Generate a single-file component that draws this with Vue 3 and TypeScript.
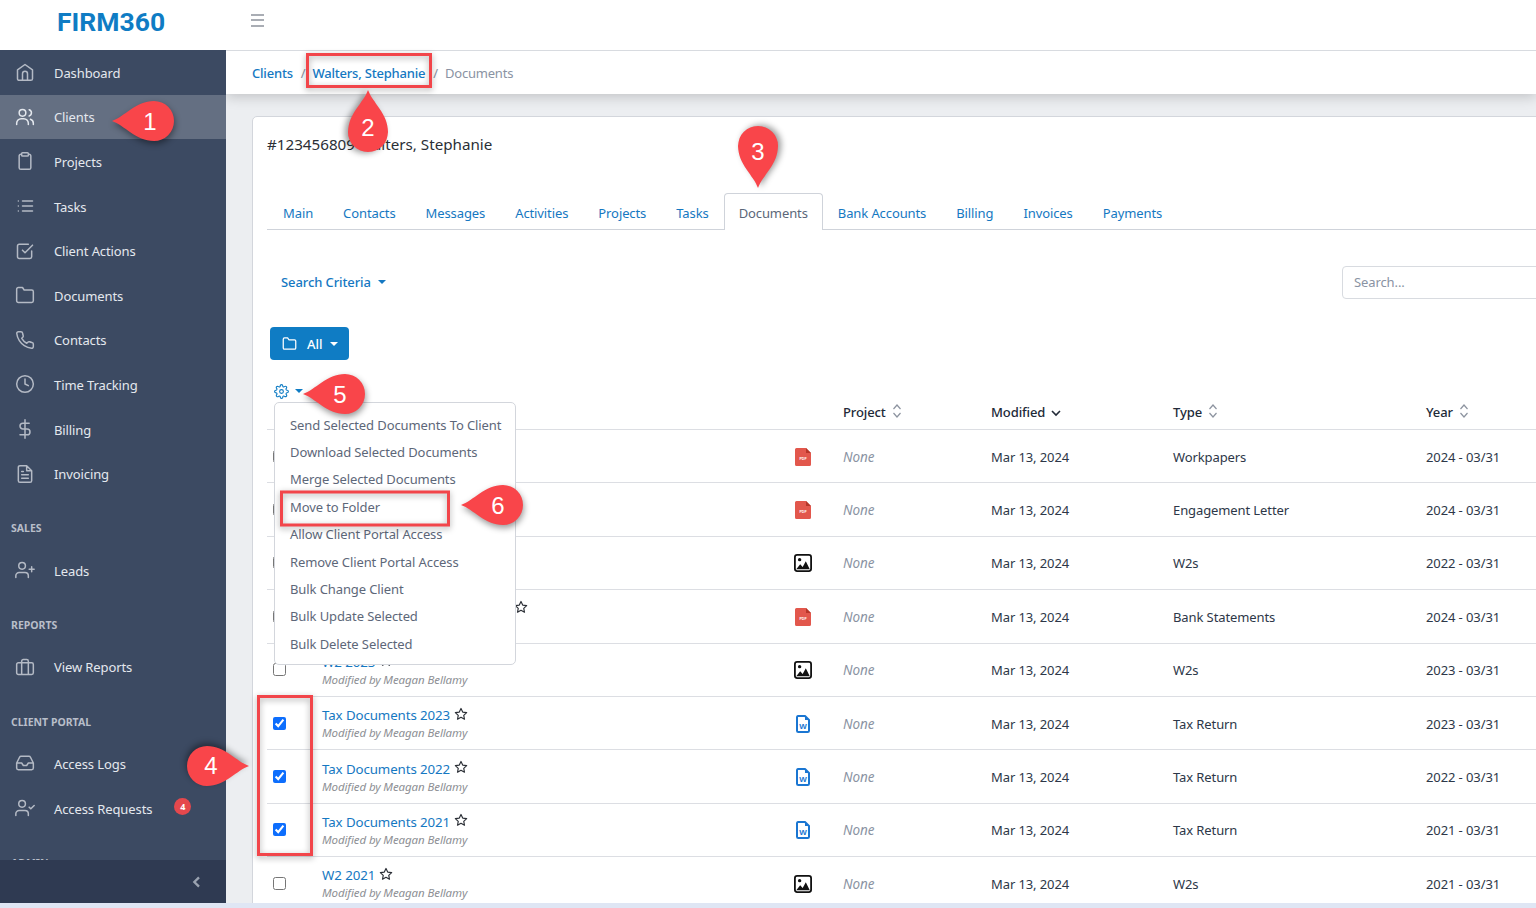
<script setup lang="ts">
const icons: Record<string, string> = {
  home: 'M3 9.5 12 3l9 6.5V20a2 2 0 0 1-2 2H5a2 2 0 0 1-2-2z M9 22v-8a3 3 0 0 1 6 0v8',
  users: 'M2 21v-1.5a5.5 5.5 0 0 1 5.5-5.5h3a5.5 5.5 0 0 1 5.5 5.5V21 M9 11a4 4 0 1 0 0-8 4 4 0 0 0 0 8z M17 3.2a4 4 0 0 1 0 7.6 M22 21v-1.5a5 5 0 0 0-3.5-4.8',
  clipboard: 'M8 4H7a2 2 0 0 0-2 2v14a2 2 0 0 0 2 2h10a2 2 0 0 0 2-2V6a2 2 0 0 0-2-2h-1 M9 2h6a1 1 0 0 1 1 1v2a1 1 0 0 1-1 1H9a1 1 0 0 1-1-1V3a1 1 0 0 1 1-1z',
  list: 'M9 6h12M9 12h12M9 18h12M4 6h.01M4 12h.01M4 18h.01',
  check: 'M9 11l3 3L21 5 M20 12v7a2 2 0 0 1-2 2H5a2 2 0 0 1-2-2V6a2 2 0 0 1 2-2h11',
  folder: 'M22 19a2 2 0 0 1-2 2H4a2 2 0 0 1-2-2V5a2 2 0 0 1 2-2h5l2 3h9a2 2 0 0 1 2 2z',
  phone: 'M22 16.92v3a2 2 0 0 1-2.18 2 19.79 19.79 0 0 1-8.63-3.07 19.5 19.5 0 0 1-6-6 19.79 19.79 0 0 1-3.07-8.67A2 2 0 0 1 4.11 2h3a2 2 0 0 1 2 1.72 12.84 12.84 0 0 0 .7 2.81 2 2 0 0 1-.45 2.11L8.09 9.91a16 16 0 0 0 6 6l1.27-1.27a2 2 0 0 1 2.11-.45 12.84 12.84 0 0 0 2.81.7A2 2 0 0 1 22 16.92z',
  clock: 'M12 2a10 10 0 1 0 0 20 10 10 0 0 0 0-20z M12 6v6l4 2',
  dollar: 'M12 1v22 M17 5H9.5a3.5 3.5 0 0 0 0 7h5a3.5 3.5 0 0 1 0 7H6',
  file: 'M14 2H6a2 2 0 0 0-2 2v16a2 2 0 0 0 2 2h12a2 2 0 0 0 2-2V8z M14 2v6h6 M16 13H8 M16 17H8 M10 9H8',
  userPlus: 'M16 21v-2a4 4 0 0 0-4-4H5a4 4 0 0 0-4 4v2 M8.5 11a4 4 0 1 0 0-8 4 4 0 0 0 0 8z M20 8v6 M23 11h-6',
  briefcase: 'M4 7h16a2 2 0 0 1 2 2v10a2 2 0 0 1-2 2H4a2 2 0 0 1-2-2V9a2 2 0 0 1 2-2z M8 21V5a2 2 0 0 1 2-2h4a2 2 0 0 1 2 2v16',
  inbox: 'M22 12h-6l-2 3h-4l-2-3H2 M5.45 5.11 2 12v6a2 2 0 0 0 2 2h16a2 2 0 0 0 2-2v-6l-3.45-6.89A2 2 0 0 0 16.76 4H7.24a2 2 0 0 0-1.79 1.11z',
  userCheck: 'M16 21v-2a4 4 0 0 0-4-4H5a4 4 0 0 0-4 4v2 M8.5 11a4 4 0 1 0 0-8 4 4 0 0 0 0 8z M17 11l2 2 4-4',
}
const gear = 'M12 15a3 3 0 1 0 0-6 3 3 0 0 0 0 6z M19.4 15a1.65 1.65 0 0 0 .33 1.82l.06.06a2 2 0 0 1 0 2.83 2 2 0 0 1-2.83 0l-.06-.06a1.65 1.65 0 0 0-1.82-.33 1.65 1.65 0 0 0-1 1.51V21a2 2 0 0 1-2 2 2 2 0 0 1-2-2v-.09A1.65 1.65 0 0 0 9 19.4a1.65 1.65 0 0 0-1.82.33l-.06.06a2 2 0 0 1-2.83 0 2 2 0 0 1 0-2.83l.06-.06a1.65 1.65 0 0 0 .33-1.82 1.65 1.65 0 0 0-1.51-1H3a2 2 0 0 1-2-2 2 2 0 0 1 2-2h.09A1.65 1.65 0 0 0 4.6 9a1.65 1.65 0 0 0-.33-1.82l-.06-.06a2 2 0 0 1 0-2.83 2 2 0 0 1 2.83 0l.06.06a1.65 1.65 0 0 0 1.82.33H9a1.65 1.65 0 0 0 1-1.51V3a2 2 0 0 1 2-2 2 2 0 0 1 2 2v.09a1.65 1.65 0 0 0 1 1.51 1.65 1.65 0 0 0 1.82-.33l.06-.06a2 2 0 0 1 2.83 0 2 2 0 0 1 0 2.83l-.06.06a1.65 1.65 0 0 0-.33 1.82V9a1.65 1.65 0 0 0 1.51 1H21a2 2 0 0 1 2 2 2 2 0 0 1-2 2h-.09a1.65 1.65 0 0 0-1.51 1z'

type NavEntry = { label: string; icon?: string; active?: boolean; badge?: string; section?: boolean }
const nav: NavEntry[] = [
  { label: 'Dashboard', icon: 'home' },
  { label: 'Clients', icon: 'users', active: true },
  { label: 'Projects', icon: 'clipboard' },
  { label: 'Tasks', icon: 'list' },
  { label: 'Client Actions', icon: 'check' },
  { label: 'Documents', icon: 'folder' },
  { label: 'Contacts', icon: 'phone' },
  { label: 'Time Tracking', icon: 'clock' },
  { label: 'Billing', icon: 'dollar' },
  { label: 'Invoicing', icon: 'file' },
  { label: 'SALES', section: true },
  { label: 'Leads', icon: 'userPlus' },
  { label: 'REPORTS', section: true },
  { label: 'View Reports', icon: 'briefcase' },
  { label: 'CLIENT PORTAL', section: true },
  { label: 'Access Logs', icon: 'inbox' },
  { label: 'Access Requests', icon: 'userCheck', badge: '4' },
  { label: 'ADMIN', section: true },
]
const tabs = ['Main', 'Contacts', 'Messages', 'Activities', 'Projects', 'Tasks', 'Documents', 'Bank Accounts', 'Billing', 'Invoices', 'Payments']
const menu = ['Send Selected Documents To Client', 'Download Selected Documents', 'Merge Selected Documents', 'Move to Folder', 'Allow Client Portal Access', 'Remove Client Portal Access', 'Bulk Change Client', 'Bulk Update Selected', 'Bulk Delete Selected']
type Doc = { name: string; kind: 'pdf' | 'img' | 'word'; type: string; year: string; checked?: boolean }
const docs: Doc[] = [
  { name: 'Workpapers 2024', kind: 'pdf', type: 'Workpapers', year: '2024 - 03/31' },
  { name: 'Engagement Letter 2024', kind: 'pdf', type: 'Engagement Letter', year: '2024 - 03/31' },
  { name: 'W2 2022', kind: 'img', type: 'W2s', year: '2022 - 03/31' },
  { name: 'Bank Statements - March 2024', kind: 'pdf', type: 'Bank Statements', year: '2024 - 03/31' },
  { name: 'W2 2023', kind: 'img', type: 'W2s', year: '2023 - 03/31' },
  { name: 'Tax Documents 2023', kind: 'word', type: 'Tax Return', year: '2023 - 03/31', checked: true },
  { name: 'Tax Documents 2022', kind: 'word', type: 'Tax Return', year: '2022 - 03/31', checked: true },
  { name: 'Tax Documents 2021', kind: 'word', type: 'Tax Return', year: '2021 - 03/31', checked: true },
  { name: 'W2 2021', kind: 'img', type: 'W2s', year: '2021 - 03/31' },
]
const columns = [
  { label: 'Project', sort: 'both' },
  { label: 'Modified', sort: 'down' },
  { label: 'Type', sort: 'both' },
  { label: 'Year', sort: 'both' },
]
const callouts = [
  { n: '1', x: 154, y: 121, rot: 0, tx: 150, ty: 121 },
  { n: '2', x: 368, y: 132, rot: 90, tx: 368, ty: 127 },
  { n: '3', x: 758, y: 146, rot: -90, tx: 758, ty: 151 },
  { n: '4', x: 207, y: 766, rot: 180, tx: 211, ty: 765 },
  { n: '5', x: 345, y: 394, rot: 0, tx: 340, ty: 394 },
  { n: '6', x: 503, y: 505, rot: 0, tx: 498, ty: 505 },
]
const boxes = [
  { x: 307.5, y: 54.5, w: 123, h: 32 },
  { x: 281.5, y: 492, w: 167, h: 33 },
  { x: 258.5, y: 696.5, w: 53, h: 158 },
]
</script>

<template>
  <div class="app">
    <header class="topbar">
      <div class="brand"><span class="logo">FIRM360</span></div>
      <div class="burger"><i></i><i></i><i></i></div>
    </header>
    <div class="body">
      <aside class="sidebar">
        <nav class="nav">
          <template v-for="item in nav" :key="item.label">
            <div v-if="item.section" class="section">{{ item.label }}</div>
            <div v-else class="item" :class="{ active: item.active }">
              <svg class="nav-icon" viewBox="0 0 24 24"><path :d="icons[item.icon as string]" /></svg>
              <span class="item-label">{{ item.label }}</span>
              <b v-if="item.badge" class="badge">{{ item.badge }}</b>
            </div>
          </template>
        </nav>
        <div class="collapse">
          <svg viewBox="0 0 24 24"><path d="M15 5l-7 7 7 7" /></svg>
        </div>
      </aside>
      <main class="main">
        <div class="crumbs">
          <a>Clients</a><span class="sep">/</span><a>Walters, Stephanie</a><span class="sep">/</span><span class="here">Documents</span>
        </div>
        <section class="card">
          <h1 class="title">#123456809 Walters, Stephanie</h1>
          <div class="tabs">
            <a v-for="t in tabs" :key="t" class="tab" :class="{ current: t === 'Documents' }">{{ t }}</a>
          </div>
          <div class="filter">
            <a class="criteria">Search Criteria<i class="caret"></i></a>
            <div class="search">Search...</div>
          </div>
          <button class="all">
            <svg viewBox="0 0 24 24"><path :d="icons.folder" /></svg>
            All<i class="caret"></i>
          </button>
          <div class="gear-row">
            <svg class="gear" viewBox="0 0 24 24"><path :d="gear" /></svg>
            <i class="caret"></i>
          </div>
          <div class="table">
            <div class="row head">
              <span></span><span></span><span></span>
              <span v-for="c in columns" :key="c.label" class="th">
                {{ c.label }}
                <svg v-if="c.sort === 'both'" class="sort" viewBox="0 0 12 16"><path d="M2.5 6 6 2l3.500 4M2.500 10 6 14l3.500-4" /></svg>
                <svg v-else class="sort dark" viewBox="0 0 12 16"><path d="M2 6l4 4 4-4" /></svg>
              </span>
            </div>
            <div v-for="d in docs" :key="d.name" class="row">
              <span class="cb"><input type="checkbox" :checked="d.checked" /></span>
              <div class="doc">
                <div class="doc-name">
                  <a>{{ d.name }}</a>
                  <svg class="star" viewBox="0 0 24 24"><path d="M12 2.500l2.900 6.200 6.800.9-5 4.700 1.300 6.700-6-3.300-6 3.300 1.300-6.700-5-4.700 6.800-.9z" /></svg>
                </div>
                <div class="doc-sub">Modified by Meagan Bellamy</div>
              </div>
              <span class="kind">
                <svg v-if="d.kind === 'pdf'" viewBox="0 0 16 18" class="ficon">
                  <path fill="#e2574c" d="M1.500 0H11l5 5v11.500a1.500 1.500 0 0 1-1.500 1.500h-13A1.500 1.500 0 0 1 0 16.500v-15A1.500 1.500 0 0 1 1.500 0z" />
                  <path fill="#b53629" d="M11 0l5 5h-5z" />
                  <text x="8" y="11.500" text-anchor="middle" class="pdf-text">PDF</text>
                </svg>
                <svg v-else-if="d.kind === 'word'" viewBox="0 0 14 18" class="ficon word">
                  <path fill="#fff" stroke="#1a76d2" stroke-width="2" stroke-linejoin="round" d="M2 1h7l4 4v10.700a1.300 1.300 0 0 1-1.300 1.300H2.300A1.300 1.300 0 0 1 1 15.700V2.300A1.300 1.300 0 0 1 2 1z" />
                  <path fill="#1a76d2" d="M9 1l4 4H9z" />
                  <text x="7" y="14.200" text-anchor="middle" class="word-text">W</text>
                </svg>
                <svg v-else viewBox="0 0 16 16" class="ficon img">
                  <rect x=".8" y=".8" width="14.400" height="14.400" rx="2" fill="#fff" stroke="#111" stroke-width="1.600" />
                  <path fill="#111" d="M2 13.500l3.500-4.500 2.200 2.500L10.500 6.500l3.500 7z" />
                  <circle cx="5" cy="5" r="1.500" fill="#111" />
                </svg>
              </span>
              <span class="none">None</span>
              <span class="cell">Mar 13, 2024</span>
              <span class="cell">{{ d.type }}</span>
              <span class="cell">{{ d.year }}</span>
            </div>
          </div>
          <div class="menu">
            <div v-for="m in menu" :key="m" class="menu-item">{{ m }}</div>
          </div>
        </section>
      </main>
    </div>
    <svg class="marks" width="1536" height="908" viewBox="0 0 1536 908">
      <rect v-for="(b, i) in boxes" :key="i" class="box" :x="b.x" :y="b.y" :width="b.w" :height="b.h" />
      <g v-for="c in callouts" :key="c.n">
        <path class="drop" :transform="`translate(${c.x} ${c.y}) rotate(${c.rot})`" d="M-42 0C-30-4-18-20 0-20A20 20 0 0 1 0 20C-18 20-30 4-42 0Z" />
        <text class="num" :x="c.tx" :y="c.ty" text-anchor="middle" dominant-baseline="central">{{ c.n }}</text>
      </g>
    </svg>
  </div>
</template>

<style>
html, body { margin: 0; background: #dfe6f4; }
</style>

<style scoped>
.app {
  position: relative;
  width: 1536px;
  height: 903px;
  display: flex;
  flex-direction: column;
  overflow: hidden;
  font-family: "Noto Sans", "Open Sans", sans-serif;
  font-size: 13px;
  letter-spacing: -.1px;
  color: #2d3748;
  background: #eceef1;
}
.topbar { height: 50px; flex: none; display: flex; align-items: center; background: #fff; }
.brand { width: 226px; padding-left: 57px; box-sizing: border-box; margin-top: -7px; }
.logo { font-family: Roboto, sans-serif; font-weight: 700; font-size: 26.500px; letter-spacing: 0; color: #0f7cc4; }
.burger { margin-left: 25px; margin-top: -10px; display: flex; flex-direction: column; gap: 3.500px; }
.burger i { display: block; width: 13px; height: 2px; background: #a9adb4; }
.body { flex: 1; display: flex; min-height: 0; }
.sidebar { width: 226px; flex: none; display: flex; flex-direction: column; background: #3c4a62; color: #e4e8ee; }
.nav { flex: 1; min-height: 0; overflow: hidden; }
.item { height: 44.6px; display: flex; align-items: center; padding-left: 15px; gap: 19px; box-sizing: border-box; }
.item-label { padding-top: 1px; }
.item.active { background: #646f82; }
.nav-icon { width: 20px; height: 20px; flex: none; fill: none; stroke: #b4bac5; stroke-width: 1.800; stroke-linecap: round; stroke-linejoin: round; }
.item.active .nav-icon { stroke: #e4e8ee; }
.section { height: 52px; box-sizing: border-box; padding: 25.500px 0 0 11px; font-size: 10.500px; line-height: 15px; font-weight: 700; letter-spacing: 0; color: #b8bec9; }
.badge { width: 17px; height: 17px; margin: -4px 0 0 3px; border-radius: 50%; background: #e5484d; color: #fff; font-size: 9px; line-height: 17px; text-align: center; }
.collapse { height: 43px; flex: none; background: #2f3a52; display: flex; align-items: center; justify-content: flex-end; padding-right: 21px; }
.collapse svg { width: 16px; height: 16px; fill: none; stroke: #9aa2b0; stroke-width: 3.500; }
.main { flex: 1; min-width: 0; overflow: hidden; }
.crumbs {
  height: 44px;
  box-sizing: border-box;
  border-top: 1px solid #d8dbe0;
  padding: 0 0 0 26px;
  display: flex;
  align-items: center;
  background: #fff;
  box-shadow: 0 3px 12px rgba(0, 0, 0, .18);
  position: relative;
  letter-spacing: -.2px;
}
.crumbs a { color: #1578c2; font-weight: 500; }
.sep { color: #8a93a3; margin: 0 7px 0 8px; }
.here { color: #8a93a3; }
.card {
  position: relative;
  width: 1400px;
  height: 900px;
  margin: 22px 0 0 26px;
  box-sizing: border-box;
  padding: 0 14px;
  background: #fff;
  border: 1px solid #d3d6dc;
  border-radius: 5px 0 0 0;
}
.title { margin: 0; padding-top: 16px; height: 50px; box-sizing: border-box; font-size: 15.200px; line-height: 22px; font-weight: 400; letter-spacing: 0; color: #2b2f36; }
.tabs { margin-top: 26px; padding-left: 1px; display: flex; height: 36px; border-bottom: 1px solid #cfd3da; }
.tab { padding: 0 14px; height: 36px; line-height: 38px; color: #1578c2; box-sizing: border-box; border: 1px solid transparent; border-bottom: 0; }
.tab.current { color: #5b6779; background: #fff; border-color: #cfd3da; border-radius: 4px 4px 0 0; height: 37px; }
.filter { margin-top: 35px; display: flex; justify-content: space-between; align-items: center; height: 33px; padding-left: 14px; width: 1386px; box-sizing: border-box; }
.criteria { color: #1578c2; font-weight: 500; display: flex; align-items: center; }
.caret { display: inline-block; width: 0; height: 0; margin-left: 7px; border: 4px solid transparent; border-top-color: currentColor; border-bottom: 0; }
.search { width: 307px; height: 33px; margin: 1px 4px 0 0; box-sizing: border-box; border: 1px solid #d8dbe0; border-radius: 4px; padding: 0 11px; line-height: 31px; color: #8a93a3; }
.all {
  display: flex; align-items: center; margin: 29px 0 0 3px; width: 79px; height: 33px; padding: 0 0 0 12px; box-sizing: border-box;
  border: 0; border-radius: 4px; background: #0f7cc4; color: #fff; font: inherit; font-weight: 500;
}
.all svg { width: 15px; height: 15px; margin-right: 10px; fill: none; stroke: #fff; stroke-width: 2; stroke-linejoin: round; }
.gear-row { display: flex; align-items: center; margin: 23px 0 0 7px; height: 16px; color: #0f7cc4; }
.gear { width: 15px; height: 15px; fill: none; stroke: #0f7cc4; stroke-width: 1.800; }
.gear-row .caret { margin-left: 6px; }
.row {
  height: 53.400px;
  box-sizing: border-box;
  display: grid;
  grid-template-columns: 55px 472px 49px 148px 182px 253px 1fr;
  align-items: center;
  border-bottom: 1px solid #dcdee3;
}
.row.head { height: 31px; padding-bottom: 4px; }
.th { font-weight: 500; color: #222a38; white-space: nowrap; display: flex; align-items: center; gap: 5px; }
.sort { width: 12px; height: 16px; fill: none; stroke: #8c939f; stroke-width: 1.200; margin-top: -3px; }
.sort.dark { stroke: #222a38; stroke-width: 1.600; margin-top: 1px; }
.cb { padding-left: 6px; display: flex; }
.cb input { width: 13px; height: 13px; margin: 0; accent-color: #0d6efd; }
.doc { padding-top: 1px; }
.doc-name { display: flex; align-items: center; gap: 4px; line-height: 18px; }
.doc-name a { color: #1578c2; font-size: 13.300px; }
.star { width: 14px; height: 14px; fill: none; stroke: #2b2f36; stroke-width: 2; stroke-linejoin: round; margin-top: -3px; }
.doc-sub { font-size: 11.500px; line-height: 17px; font-style: italic; color: #8d8f94; }
.kind { display: flex; padding-top: 1px; }
.ficon { width: 18px; height: 18px; }
.pdf-text { font-family: "Liberation Sans", sans-serif; font-size: 3.600px; font-weight: 700; fill: #fff; letter-spacing: 0; }
.word-text { font-family: "Liberation Sans", sans-serif; font-size: 8px; font-weight: 700; fill: #1a76d2; letter-spacing: 0; }
.none { font-style: italic; color: #8a93a3; font-size: 13.500px; padding-top: 1px; }
.cell { white-space: nowrap; padding-top: 1px; }
.menu {
  position: absolute;
  left: 21px;
  top: 285px;
  width: 242px;
  height: 263px;
  box-sizing: border-box;
  padding: 8.600px 0;
  background: #fff;
  border: 1px solid #d3d6dc;
  border-radius: 5px;
}
.menu-item { height: 27.400px; line-height: 27.400px; padding-left: 15px; color: #5d6779; white-space: nowrap; }
.marks { position: absolute; left: 0; top: 0; pointer-events: none; }
.box { fill: none; stroke: #f2454a; stroke-width: 3; filter: drop-shadow(0 2px 3px rgba(0, 0, 0, .35)); }
.drop { fill: #f9454a; filter: drop-shadow(1px 3px 3px rgba(0, 0, 0, .4)); }
.num { fill: #fff; font-family: "Liberation Sans", sans-serif; font-size: 24px; letter-spacing: 0; }
</style>
